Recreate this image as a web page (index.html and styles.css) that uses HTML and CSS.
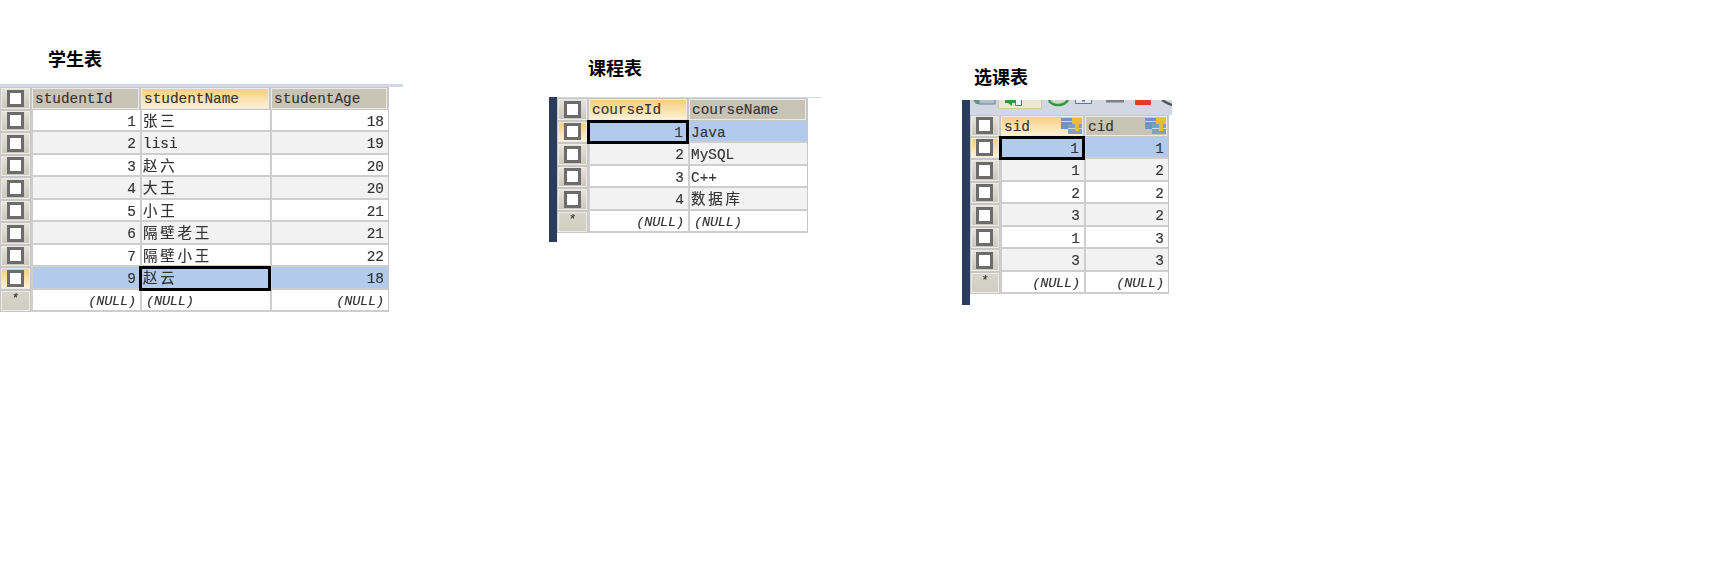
FILE: index.html
```html
<!DOCTYPE html>
<html lang="zh">
<head>
<meta charset="utf-8">
<title>表</title>
<link rel="stylesheet" href="styles.css">
</head>
<body>
<main class="page">
  <section class="panel panel-student">
    <h2 class="title">学生表</h2>
    <div class="topline"></div>
    <div class="grid g-student">
      <div class="row head"><div class="rh"><i class="box"></i></div><div class="ch">studentId</div><div class="ch on">studentName</div><div class="ch">studentAge</div></div>
      <div class="row"><div class="rh"><i class="box"></i></div><div class="c r">1</div><div class="c cjk">张三</div><div class="c r">18</div></div>
      <div class="row even"><div class="rh"><i class="box"></i></div><div class="c r">2</div><div class="c">lisi</div><div class="c r">19</div></div>
      <div class="row"><div class="rh"><i class="box"></i></div><div class="c r">3</div><div class="c cjk">赵六</div><div class="c r">20</div></div>
      <div class="row even"><div class="rh"><i class="box"></i></div><div class="c r">4</div><div class="c cjk">大王</div><div class="c r">20</div></div>
      <div class="row"><div class="rh"><i class="box"></i></div><div class="c r">5</div><div class="c cjk">小王</div><div class="c r">21</div></div>
      <div class="row even"><div class="rh"><i class="box"></i></div><div class="c r">6</div><div class="c cjk">隔壁老王</div><div class="c r">21</div></div>
      <div class="row"><div class="rh"><i class="box"></i></div><div class="c r">7</div><div class="c cjk">隔壁小王</div><div class="c r">22</div></div>
      <div class="row sel"><div class="rh"><i class="box"></i></div><div class="c r">9</div><div class="c cjk cur">赵云</div><div class="c r">18</div></div>
      <div class="row"><div class="rh star">*</div><div class="c r n">(NULL)</div><div class="c n">(NULL)</div><div class="c r n">(NULL)</div></div>
    </div>
  </section>

  <section class="panel panel-course">
    <h2 class="title">课程表</h2>
    <div class="framed">
      <div class="rail"></div>
      <div class="body">
        <div class="topline"></div>
        <div class="grid g-course">
          <div class="row head"><div class="rh"><i class="box"></i></div><div class="ch on">courseId</div><div class="ch">courseName</div></div>
          <div class="row sel"><div class="rh"><i class="box"></i></div><div class="c r cur">1</div><div class="c">Java</div></div>
          <div class="row even"><div class="rh"><i class="box"></i></div><div class="c r">2</div><div class="c">MySQL</div></div>
          <div class="row"><div class="rh"><i class="box"></i></div><div class="c r">3</div><div class="c">C++</div></div>
          <div class="row even"><div class="rh"><i class="box"></i></div><div class="c r">4</div><div class="c cjk">数据库</div></div>
          <div class="row"><div class="rh star">*</div><div class="c r n">(NULL)</div><div class="c n">(NULL)</div></div>
        </div>
      </div>
    </div>
  </section>

  <section class="panel panel-pick">
    <h2 class="title">选课表</h2>
    <div class="framed">
      <div class="rail"></div>
      <div class="body">
        <div class="toolbar">
          <svg class="tools" width="202" height="15" viewBox="0 0 202 15">
            <path d="M3 0l3 4h3V0z" fill="#5e9a78"/>
            <rect x="9" y="-2" width="16" height="6" fill="#b4c0cc" stroke="#6d8296"/>
            <path d="M25 0v4" stroke="#8a9aaa"/>
            <path d="M28.500 -2h43v10.500h-43z" fill="#ece7d6" stroke="#d4ca9f"/>
            <path d="M35 0h10v3h-3v3l-4-3h-3z" fill="#2f9a3c"/>
            <path d="M45.500 0v5.500h6V0" fill="#eef2f7" stroke="#5d7390"/>
            <path d="M79 0c1 3 5 5 9 5s8-2 10-5" fill="#cfd9cc" stroke="#2f9a3c" stroke-width="2.500"/>
            <path d="M105.500 0v3.500h16V0" fill="#e5ebf3" stroke="#5d7390"/>
            <path d="M112 0h3v1.500h-3z" fill="#5d7390"/>
            <rect x="136" y="0" width="18" height="2.500" fill="#7f7f7f"/>
            <rect x="165" y="0" width="16" height="5" rx="1" fill="#e43a2c"/>
            <path d="M192 0l5 3 5 2" fill="none" stroke="#555" stroke-width="2.500"/>
          </svg>
        </div>
        <div class="grid g-pick">
          <div class="row head"><div class="rh"><i class="box"></i></div><div class="ch on">sid<svg class="key" width="21" height="16" viewBox="0 0 21 16"><rect x="0" y="0" width="12" height="11" fill="#6f94c4"/><path d="M0 3.500h12" stroke="#c8d6e8"/><rect x="7" y="6" width="14" height="10" fill="#7f9fc6"/><path d="M7 10.500h14" stroke="#c8d6e8"/><path d="M11 0h10v6h-3v7h-4V6h-3z" fill="#e6bd3c"/></svg></div><div class="ch">cid<svg class="key" width="21" height="16" viewBox="0 0 21 16"><rect x="0" y="0" width="12" height="11" fill="#6f94c4"/><path d="M0 3.500h12" stroke="#c8d6e8"/><rect x="7" y="6" width="14" height="10" fill="#7f9fc6"/><path d="M7 10.500h14" stroke="#c8d6e8"/><path d="M11 0h10v6h-3v7h-4V6h-3z" fill="#e6bd3c"/></svg></div></div>
          <div class="row sel"><div class="rh"><i class="box"></i></div><div class="c r cur">1</div><div class="c r">1</div></div>
          <div class="row even"><div class="rh"><i class="box"></i></div><div class="c r">1</div><div class="c r">2</div></div>
          <div class="row"><div class="rh"><i class="box"></i></div><div class="c r">2</div><div class="c r">2</div></div>
          <div class="row even"><div class="rh"><i class="box"></i></div><div class="c r">3</div><div class="c r">2</div></div>
          <div class="row"><div class="rh"><i class="box"></i></div><div class="c r">1</div><div class="c r">3</div></div>
          <div class="row even"><div class="rh"><i class="box"></i></div><div class="c r">3</div><div class="c r">3</div></div>
          <div class="row"><div class="rh star">*</div><div class="c r n">(NULL)</div><div class="c r n">(NULL)</div></div>
        </div>
      </div>
    </div>
  </section>
</main>
</body>
</html>
```
FILE: styles.css
```css
* { box-sizing: border-box; }
html, body { margin: 0; background: #fff; }
.page { display: flex; align-items: flex-start; width: 1733px; height: 570px; overflow: hidden; }

.panel { flex: none; }
.panel-student { width: 549px; padding-top: 50px; }
.panel-course { width: 413px; padding-top: 59px; }
.panel-pick { padding-top: 68px; }

.title {
  margin: 0;
  height: 21px;
  font: bold 18px/21px "Liberation Sans", "Noto Sans CJK SC", sans-serif;
  color: #000;
}
.panel-student .title { margin: 0 0 13px 48px; }
.panel-course .title { margin: 0 0 17px 39px; }
.panel-pick .title { margin: 0 0 11px 12px; }

.topline { height: 3px; background: #d3d9e4; width: 403px; }
.panel-course .topline { height: 1px; width: 264px; }

.framed { display: flex; }
.rail { width: 8px; background: #2b3c5e; flex: none; }
.panel-course .rail { height: 145px; }
.panel-pick .rail { height: 205px; }
.body { flex: none; }

.toolbar { width: 202px; height: 15px; background: #d1d7e3; }
.tools { display: block; }

.grid { display: grid; border-right: 1px solid #c6c6c6; filter: blur(.4px); }
.g-student { grid-template-columns: 31px 109px 130px 118px; grid-auto-rows: 22.5px; width: 389px; }
.g-course { grid-template-columns: 31px 100px 119px; grid-auto-rows: 22.5px; width: 251px; }
.g-pick { grid-template-columns: 30px 84px 84px; grid-template-rows: 21.500px repeat(7, 22.5px); width: 199px; }

.row { display: contents; }

.rh, .ch, .c {
  min-width: 0;
  font: 14.4px/20px "Liberation Mono", "Noto Sans CJK SC", monospace;
  -webkit-text-stroke: .15px currentColor;
  white-space: nowrap;
  overflow: hidden;
}
.rh {
  display: flex;
  align-items: center;
  justify-content: center;
  padding-right: 1px;
  background: linear-gradient(#e6e4dc, #c9c6ba);
  border: 1px solid #c6c6c6;
  box-shadow: inset 0 0 0 1px #ecebe5;
  color: #333;
}
.box { width: 17px; height: 17px; background: #fff; border: 3px solid #6c6c6c; }
.star { font-size: 12px; font-style: italic; line-height: 14px; align-items: flex-start; padding-top: 1px; background: linear-gradient(#d7d4c9, #d0cdc1); }

.ch {
  display: flex;
  align-items: center;
  justify-content: space-between;
  padding: 2px 1px 0 3px;
  background: #c8c4b5;
  border: 1px solid #c6c6c6;
  box-shadow: inset 0 0 0 1px #ecebe5;
  color: #333;
}
.ch.on { background: linear-gradient(#f6cd7d, #fdf3d9); }
.key { flex: none; align-self: flex-start; margin-top: -1px; position: relative; top: 1px; }
.ch { overflow: visible; }

.c {
  padding: 2px 4px 0 1px;
  background: #fff;
  border-left: 2px solid #cecece;
  border-bottom: 2px solid #cecece;
  line-height: 20px;
  color: #333;
}
.even .c { background: #f2f2f2; }
.sel .c { background: #b2cbec; }
.sel .rh { background: linear-gradient(#f6cd7d, #fdf3d9); }
.r { text-align: right; }
.n { font-size: 13.6px; letter-spacing: -.2px; font-style: italic; padding-left: 4px; }
.cjk { letter-spacing: 2.9px; }
.sel .c.cur { border: 2px solid #000; box-shadow: 0 0 0 1px #000; padding: 1px 3px 0 1px; line-height: 18px; position: relative; overflow: visible; }
```
